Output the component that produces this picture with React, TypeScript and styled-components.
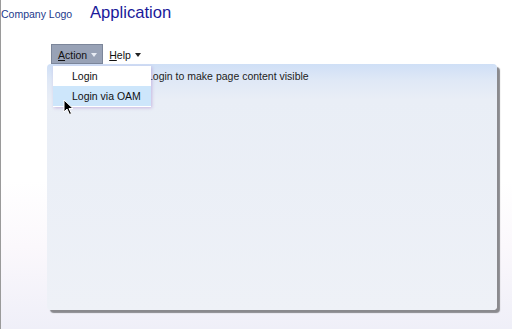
import React from "react";
import styled, { createGlobalStyle } from "styled-components";

const Global = createGlobalStyle`
  html, body { margin: 0; padding: 0; }
  body { font-family: "Liberation Sans", Arial, sans-serif; }
`;

const Page = styled.div`
  position: relative;
  height: 329px;
  box-sizing: border-box;
  border-left: 1px solid #9a9a9a;
  background: linear-gradient(#ffffff 0%, #ffffff 55%, #fbf8fc 75%, #efeff8 100%);
  overflow: hidden;
`;

const Header = styled.div`
  display: flex;
  align-items: baseline;
  height: 24px;
  padding-top: 3px;
  box-sizing: border-box;
`;

const Logo = styled.div`
  font-size: 10.5px;
  color: #1c3a8c;
  width: 89px;
`;

const Title = styled.div`
  font-size: 16.6px;
  color: #1a1a9a;
`;

const MenuBar = styled.div`
  display: flex;
  align-items: stretch;
  margin: 20px 0 0 50px;
  height: 20px;
  position: relative;
  z-index: 2;
`;

const MenuButton = styled.div<{ $active?: boolean }>`
  display: flex;
  align-items: center;
  gap: 4px;
  padding: 2px 5px 0 ${(p) => (p.$active ? 6 : 5)}px;
  font-size: 10.5px;
  color: #111;
  box-sizing: border-box;
  background: ${(p) => (p.$active ? "#98a2b6" : "transparent")};
  border: 1px solid ${(p) => (p.$active ? "#7c869a" : "transparent")};
  u { text-decoration: underline; }
`;

const Caret = styled.span<{ $light?: boolean }>`
  width: 0;
  height: 0;
  border-left: 3px solid transparent;
  border-right: 3px solid transparent;
  border-top: 4px solid ${(p) => (p.$light ? "#e8ecf4" : "#222")};
`;

const Panel = styled.div`
  margin-left: 46px;
  width: 450px;
  height: 246px;
  border-radius: 4px;
  background: linear-gradient(#cfdff6 0px, #dfe8f6 16px, #e9eef6 36px, #eef1f7 100%);
  box-shadow: 3px 3px 1px #8a8a8e;
  box-sizing: border-box;
  padding: 6px 0 0 100px;
  font-size: 10.5px;
  color: #222;
`;

const Dropdown = styled.div`
  position: absolute;
  left: 52px;
  top: 66px;
  width: 98px;
  background: #ffffff;
  box-shadow: 1px 1px 3px rgba(160, 120, 200, 0.45);
  padding: 0 0 1px;
  z-index: 3;
`;

const Item = styled.div<{ $hl?: boolean }>`
  height: 20px;
  display: flex;
  align-items: center;
  padding-left: 19px;
  font-size: 10.5px;
  color: #111;
  background: ${(p) => (p.$hl ? "#cde6fb" : "transparent")};
`;

const Cursor = styled.svg`
  position: absolute;
  left: 62px;
  top: 99px;
  z-index: 4;
`;

export default function App() {
  return (
    <>
      <Global />
      <Page>
        <Header>
          <Logo>Company Logo</Logo>
          <Title>Application</Title>
        </Header>
        <MenuBar>
          <MenuButton $active>
            <span><u>A</u>ction</span>
            <Caret $light />
          </MenuButton>
          <MenuButton>
            <span><u>H</u>elp</span>
            <Caret />
          </MenuButton>
        </MenuBar>
        <Panel>Login to make page content visible</Panel>
        <Dropdown>
          <Item>Login</Item>
          <Item $hl>Login via OAM</Item>
        </Dropdown>
        <Cursor width="12" height="17" viewBox="0 0 12 17">
          <path d="M1 1 L1 13 L4 10 L6.5 15.5 L8.5 14.5 L6 9.5 L10 9.5 Z" fill="#000" stroke="#fff" strokeWidth="1" />
        </Cursor>
      </Page>
    </>
  );
}
